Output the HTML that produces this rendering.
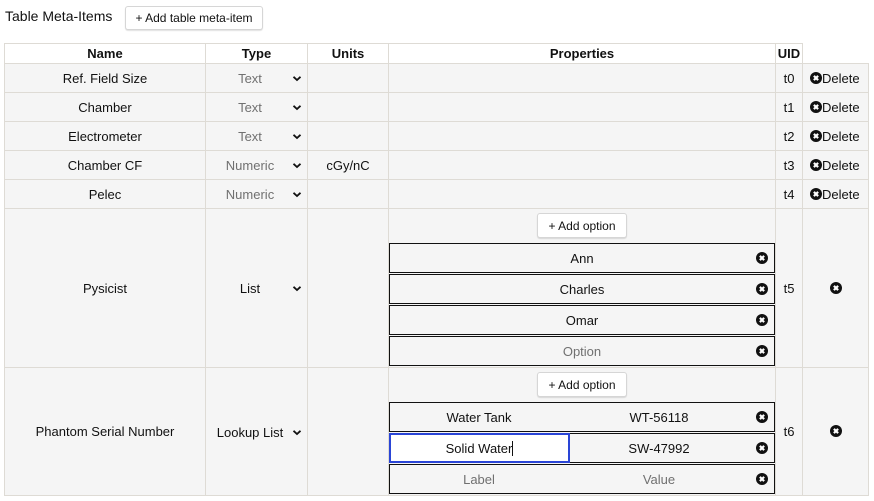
<!DOCTYPE html>
<html><head><meta charset="utf-8"><style>
*{box-sizing:border-box;margin:0;padding:0}
body{width:874px;height:501px;background:#fff;font-family:"Liberation Sans",Arial,sans-serif;font-size:13px;color:#111;position:relative;overflow:hidden}
.a{position:absolute}
.c{position:absolute;display:flex;align-items:center;justify-content:center;white-space:nowrap}
.hl{position:absolute;height:1px;background:#dedbd5}
.vl{position:absolute;width:1px;background:#dedbd5}
.btn{position:absolute;background:#fff;border:1px solid #d6d6d6;border-radius:3px;box-shadow:0 1px 1px rgba(0,0,0,.12);display:flex;align-items:center;justify-content:center;font-size:12px;color:#111}
.box{position:absolute;left:389px;width:386px;height:30px;border:1.5px solid #111;background:#f5f5f5}
.g{color:#707070}
svg.x{position:absolute;width:12px;height:12px}
.chev{position:absolute;width:10px;height:7px}
</style></head><body>
<div class="a" style="left:5px;top:8px;font-size:14px">Table Meta-Items</div>
<div class="btn" style="left:125px;top:6px;width:138px;height:24px">+ Add table meta-item</div>

<div class="a" style="left:4px;top:63px;width:865px;height:433px;background:#f5f5f5"></div>
<div class="a" style="left:4px;top:43px;width:798px;height:20px;background:#fff"></div>

<div class="hl" style="left:4px;top:43px;width:799px"></div>
<div class="hl" style="left:4px;top:63px;width:865px"></div>
<div class="hl" style="left:4px;top:92px;width:865px"></div>
<div class="hl" style="left:4px;top:121px;width:865px"></div>
<div class="hl" style="left:4px;top:150px;width:865px"></div>
<div class="hl" style="left:4px;top:179px;width:865px"></div>
<div class="hl" style="left:4px;top:208px;width:865px"></div>
<div class="hl" style="left:4px;top:367px;width:865px"></div>
<div class="hl" style="left:4px;top:495px;width:865px"></div>
<div class="vl" style="left:4px;top:43px;height:453px"></div>
<div class="vl" style="left:205px;top:43px;height:453px"></div>
<div class="vl" style="left:307px;top:43px;height:453px"></div>
<div class="vl" style="left:388px;top:43px;height:453px"></div>
<div class="vl" style="left:775px;top:43px;height:453px"></div>
<div class="vl" style="left:802px;top:43px;height:453px"></div>
<div class="vl" style="left:868px;top:63px;height:433px"></div>

<div class="c" style="left:5px;top:44px;width:200px;height:19px;font-weight:bold">Name</div>
<div class="c" style="left:206px;top:44px;width:101px;height:19px;font-weight:bold">Type</div>
<div class="c" style="left:308px;top:44px;width:80px;height:19px;font-weight:bold">Units</div>
<div class="c" style="left:389px;top:44px;width:386px;height:19px;font-weight:bold">Properties</div>
<div class="c" style="left:776px;top:44px;width:26px;height:19px;font-weight:bold">UID</div>

<svg width="0" height="0" style="position:absolute"><defs>
<symbol id="xi" viewBox="0 0 12 12"><circle cx="6" cy="6" r="6" fill="#111"/><path d="M3.9 3.9L8.1 8.1M8.1 3.9L3.9 8.1" stroke="#fff" stroke-width="2.2"/></symbol>
<symbol id="ch" viewBox="0 0 10 7"><path d="M1.5 1.8L5 5L8.5 1.8" fill="none" stroke="#111" stroke-width="1.8"/></symbol>
</defs></svg>

<div class="c" style="left:5px;top:64px;width:200px;height:28px">Ref. Field Size</div>
<div class="c g" style="left:200px;top:64px;width:100px;height:28px">Text</div>
<svg class="chev" style="left:292px;top:75px"><use href="#ch"/></svg>
<div class="c" style="left:776px;top:64px;width:26px;height:28px">t0</div>
<svg class="x" style="left:810px;top:72px"><use href="#xi"/></svg>
<div class="a" style="left:822px;top:71px">Delete</div>

<div class="c" style="left:5px;top:93px;width:200px;height:28px">Chamber</div>
<div class="c g" style="left:200px;top:93px;width:100px;height:28px">Text</div>
<svg class="chev" style="left:292px;top:104px"><use href="#ch"/></svg>
<div class="c" style="left:776px;top:93px;width:26px;height:28px">t1</div>
<svg class="x" style="left:810px;top:101px"><use href="#xi"/></svg>
<div class="a" style="left:822px;top:100px">Delete</div>

<div class="c" style="left:5px;top:122px;width:200px;height:28px">Electrometer</div>
<div class="c g" style="left:200px;top:122px;width:100px;height:28px">Text</div>
<svg class="chev" style="left:292px;top:133px"><use href="#ch"/></svg>
<div class="c" style="left:776px;top:122px;width:26px;height:28px">t2</div>
<svg class="x" style="left:810px;top:130px"><use href="#xi"/></svg>
<div class="a" style="left:822px;top:129px">Delete</div>

<div class="c" style="left:5px;top:151px;width:200px;height:28px">Chamber CF</div>
<div class="c g" style="left:200px;top:151px;width:100px;height:28px">Numeric</div>
<svg class="chev" style="left:292px;top:162px"><use href="#ch"/></svg>
<div class="c" style="left:308px;top:151px;width:80px;height:28px">cGy/nC</div>
<div class="c" style="left:776px;top:151px;width:26px;height:28px">t3</div>
<svg class="x" style="left:810px;top:159px"><use href="#xi"/></svg>
<div class="a" style="left:822px;top:158px">Delete</div>

<div class="c" style="left:5px;top:180px;width:200px;height:28px">Pelec</div>
<div class="c g" style="left:200px;top:180px;width:100px;height:28px">Numeric</div>
<svg class="chev" style="left:292px;top:191px"><use href="#ch"/></svg>
<div class="c" style="left:776px;top:180px;width:26px;height:28px">t4</div>
<svg class="x" style="left:810px;top:188px"><use href="#xi"/></svg>
<div class="a" style="left:822px;top:187px">Delete</div>

<div class="c" style="left:5px;top:209px;width:200px;height:158px">Pysicist</div>
<div class="c" style="left:200px;top:209px;width:100px;height:158px">List</div>
<svg class="chev" style="left:292px;top:285px"><use href="#ch"/></svg>
<div class="c" style="left:776px;top:209px;width:26px;height:158px">t5</div>
<svg class="x" style="left:830px;top:282px"><use href="#xi"/></svg>
<div class="btn" style="left:537px;top:213px;width:90px;height:25px">+ Add option</div>
<div class="box c" style="top:243px">Ann</div>
<svg class="x" style="left:756px;top:252px"><use href="#xi"/></svg>
<div class="box c" style="top:274px">Charles</div>
<svg class="x" style="left:756px;top:283px"><use href="#xi"/></svg>
<div class="box c" style="top:305px">Omar</div>
<svg class="x" style="left:756px;top:314px"><use href="#xi"/></svg>
<div class="box c g" style="top:336px">Option</div>
<svg class="x" style="left:756px;top:345px"><use href="#xi"/></svg>

<div class="c" style="left:5px;top:368px;width:200px;height:127px">Phantom Serial Number</div>
<div class="c" style="left:200px;top:368px;width:100px;height:129px">Lookup List</div>
<svg class="chev" style="left:292px;top:429px"><use href="#ch"/></svg>
<div class="c" style="left:776px;top:368px;width:26px;height:127px">t6</div>
<svg class="x" style="left:830px;top:425px"><use href="#xi"/></svg>
<div class="btn" style="left:537px;top:372px;width:90px;height:25px">+ Add option</div>
<div class="box" style="top:402px"></div>
<div class="c" style="left:389px;top:402px;width:180px;height:30px">Water Tank</div>
<div class="c" style="left:569px;top:402px;width:180px;height:30px">WT-56118</div>
<svg class="x" style="left:756px;top:411px"><use href="#xi"/></svg>
<div class="box" style="top:433px"></div>
<div class="a" style="left:389px;top:433px;width:181px;height:30px;background:#fff;border:2px solid #2a45d6"></div>
<div class="c" style="left:389px;top:433px;width:181px;height:30px">Solid Water<span style="display:inline-block;width:1px;height:15px;background:#111"></span></div>
<div class="c" style="left:569px;top:433px;width:180px;height:30px">SW-47992</div>
<svg class="x" style="left:756px;top:442px"><use href="#xi"/></svg>
<div class="box" style="top:464px"></div>
<div class="c g" style="left:389px;top:464px;width:180px;height:30px">Label</div>
<div class="c g" style="left:569px;top:464px;width:180px;height:30px">Value</div>
<svg class="x" style="left:756px;top:473px"><use href="#xi"/></svg>
</body></html>
